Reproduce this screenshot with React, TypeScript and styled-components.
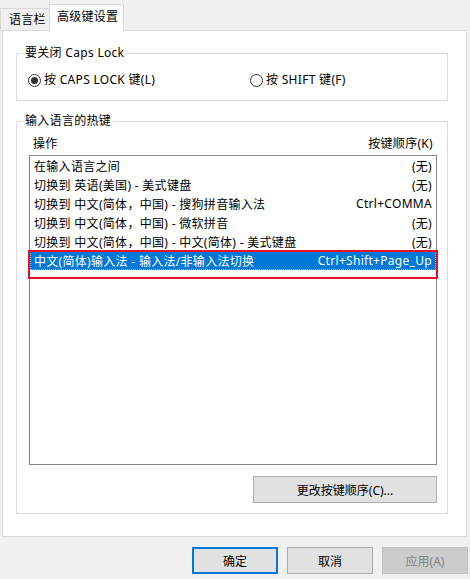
import styled, { createGlobalStyle } from 'styled-components'

const GlobalStyle = createGlobalStyle`
  html, body {
    margin: 0;
    padding: 0;
    background: #f0f0f0;
  }
  body {
    font-family: "Noto Sans", "Noto Sans CJK SC", sans-serif;
    font-size: 12px;
    letter-spacing: 0.3px;
    color: #000;
  }
`

interface Hotkey {
  action: string
  keys: string
  selected?: boolean
}

const hotkeys: Hotkey[] = [
  { action: '在输入语言之间', keys: '(无)' },
  { action: '切换到 英语(美国) - 美式键盘', keys: '(无)' },
  { action: '切换到 中文(简体，中国) - 搜狗拼音输入法', keys: 'Ctrl+COMMA' },
  { action: '切换到 中文(简体，中国) - 微软拼音', keys: '(无)' },
  { action: '切换到 中文(简体，中国) - 中文(简体) - 美式键盘', keys: '(无)' },
  { action: '中文(简体)输入法 - 输入法/非输入法切换', keys: 'Ctrl+Shift+Page_Up', selected: true },
]

const App: React.FC = () => {
  return (
    <Window>
      <GlobalStyle />
      <TabStrip>
        <Tab>语言栏</Tab>
        <Tab $active>高级键设置</Tab>
      </TabStrip>
      <Panel>
        <Group>
          <Legend>要关闭 Caps Lock</Legend>
          <RadioRow>
            <RadioOption $width={222}>
              <RadioCircle $checked />
              按 CAPS LOCK 键(L)
            </RadioOption>
            <RadioOption>
              <RadioCircle />
              按 SHIFT 键(F)
            </RadioOption>
          </RadioRow>
        </Group>
        <Group>
          <Legend>输入语言的热键</Legend>
          <HeaderRow>
            <span>操作</span>
            <span>按键顺序(K)</span>
          </HeaderRow>
          <ListBox>
            {hotkeys.map(h => (
              <ListRow key={h.action} $selected={h.selected}>
                <span>{h.action}</span>
                <span>{h.keys}</span>
              </ListRow>
            ))}
            <Highlight />
          </ListBox>
          <GroupFooter>
            <Button $width={184}>更改按键顺序(C)...</Button>
          </GroupFooter>
        </Group>
      </Panel>
      <DialogButtons>
        <Button $default>确定</Button>
        <Button>取消</Button>
        <Button $disabled>应用(A)</Button>
      </DialogButtons>
    </Window>
  )
}

export default App

const Window = styled.div`
  width: 470px;
  height: 579px;
  display: flex;
  flex-direction: column;
  background: #f0f0f0;
  overflow: hidden;
`
const TabStrip = styled.div`
  display: flex;
  align-items: flex-end;
  height: 31px;
  margin-bottom: -1px;
  position: relative;
  z-index: 1;
`
const Tab = styled.div<{ $active?: boolean }>`
  box-sizing: border-box;
  height: ${p => (p.$active ? 27 : 23)}px;
  padding: ${p => (p.$active ? '0 5px 2px 7px' : '0 3px 0 8px')};
  display: flex;
  align-items: center;
  background: ${p => (p.$active ? '#fff' : '#f0f0f0')};
  border: 1px solid #d9d9d9;
  border-bottom: ${p => (p.$active ? 'none' : '1px solid #d9d9d9')};
  margin-left: ${p => (p.$active ? -1 : 0)}px;
  line-height: 16px;
`
const Panel = styled.div`
  box-sizing: border-box;
  margin: 0 3px 0 2px;
  background: #fff;
  border: 1px solid #d9d9d9;
  padding: 14px 18px 22px 13px;
  display: flex;
  flex-direction: column;
  gap: 12px;
`
const Group = styled.fieldset`
  margin: 0;
  padding: 0;
  border: 1px solid #dcdcdc;
  min-width: 0;
`
const Legend = styled.legend`
  margin-left: 6px;
  padding: 0 2px;
  line-height: 16px;
`
const RadioRow = styled.div`
  display: flex;
  align-items: center;
  height: 16px;
  margin: 11px 0 12px 11px;
`
const RadioOption = styled.label<{ $width?: number }>`
  display: flex;
  align-items: center;
  gap: 3px;
  line-height: 16px;
  width: ${p => (p.$width ? `${p.$width}px` : 'auto')};
`
const RadioCircle = styled.span<{ $checked?: boolean }>`
  box-sizing: border-box;
  width: 13px;
  height: 13px;
  border-radius: 50%;
  border: 1px solid #333;
  background: #fff;
  display: flex;
  align-items: center;
  justify-content: center;
  &::after {
    content: '';
    width: 7px;
    height: 7px;
    border-radius: 50%;
    background: #333;
    display: ${p => (p.$checked ? 'block' : 'none')};
  }
`
const HeaderRow = styled.div`
  display: flex;
  justify-content: space-between;
  line-height: 16px;
  margin: 7px 14px 0 16px;
`
const ListBox = styled.div`
  position: relative;
  box-sizing: border-box;
  height: 310px;
  margin: 3px 10px 0 12px;
  border: 1px solid #828790;
  background: #fff;
`
const ListRow = styled.div<{ $selected?: boolean }>`
  box-sizing: border-box;
  height: 19px;
  display: flex;
  justify-content: space-between;
  align-items: center;
  padding: 0 3px;
  background: ${p => (p.$selected ? '#0078d7' : 'transparent')};
  color: ${p => (p.$selected ? '#fff' : '#000')};
  border: 1px dotted ${p => (p.$selected ? 'rgba(255,255,255,0.55)' : 'transparent')};
  white-space: nowrap;
`
const Highlight = styled.div`
  position: absolute;
  left: -2px;
  right: -2px;
  top: 94px;
  height: 29px;
  border: 2px solid #e81123;
  box-sizing: border-box;
  pointer-events: none;
`
const GroupFooter = styled.div`
  display: flex;
  justify-content: flex-end;
  margin: 11px 10px 10px 0;
`
const Button = styled.button<{ $width?: number; $default?: boolean; $disabled?: boolean }>`
  box-sizing: border-box;
  width: ${p => p.$width ?? 86}px;
  height: 27px;
  font: inherit;
  font-size: 12px;
  color: ${p => (p.$disabled ? '#838383' : '#000')};
  background: ${p => (p.$disabled ? '#cccccc' : '#e1e1e1')};
  border: ${p =>
    p.$default ? '2px solid #0078d7' : p.$disabled ? '1px solid #bfbfbf' : '1px solid #adadad'};
  padding: 0;
`
const DialogButtons = styled.div`
  display: flex;
  justify-content: flex-end;
  gap: 9px;
  margin: 10px 2px 0 0;
`
